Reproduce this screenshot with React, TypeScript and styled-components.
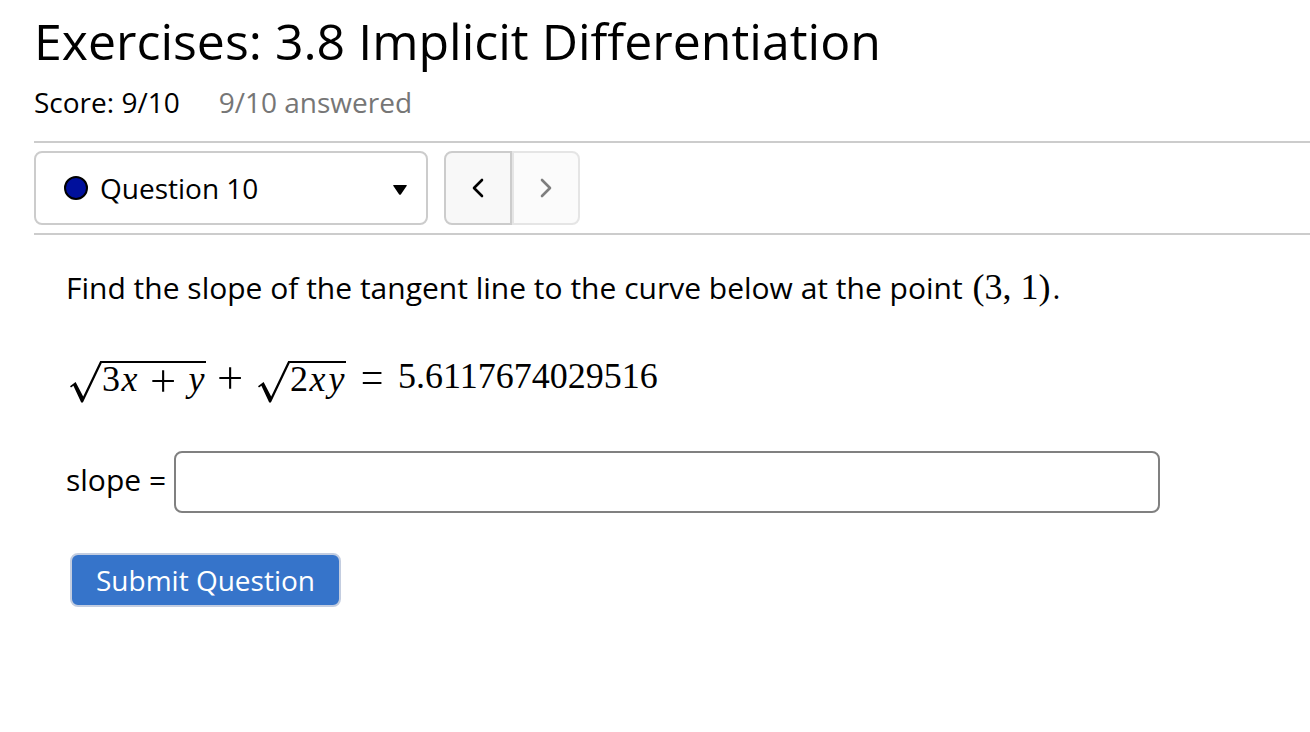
import React from "react";
import styled, { createGlobalStyle } from "styled-components";

const GlobalStyle = createGlobalStyle`
  *, *::before, *::after { box-sizing: border-box; }
  body {
    margin: 0;
    background: #fff;
    color: #000;
    font-family: "Open Sans", "Noto Sans", sans-serif;
    font-size: 28px;
  }
`;

const Page = styled.main`
  padding: 5px 0 32px 34px;
`;

const Title = styled.h1`
  margin: 0;
  font-size: 50px;
  font-weight: 400;
  line-height: 72px;
`;

const ScoreLine = styled.div`
  display: flex;
  gap: 39px;
  margin-bottom: 14px;
  line-height: 50px;
`;

const Answered = styled.span`
  color: #767676;
`;

const Toolbar = styled.nav`
  display: flex;
  gap: 16px;
  padding: 8px 0;
  border-top: 2px solid #ccc;
  border-bottom: 2px solid #ccc;
`;

const Picker = styled.div`
  position: relative;
  width: 394px;
`;

const QuestionSelect = styled.select`
  appearance: none;
  width: 100%;
  height: 74px;
  padding: 0 48px 0 64px;
  border: 2px solid #ccc;
  border-radius: 8px;
  background: #fff;
  color: #000;
  font: inherit;
`;

const StatusDot = styled.span`
  position: absolute;
  top: 25px;
  left: 30px;
  width: 24px;
  height: 24px;
  border: 2px solid #000;
  border-radius: 50%;
  background: #00109c;
  pointer-events: none;
`;

const Caret = styled.svg`
  position: absolute;
  top: 33px;
  right: 20px;
  width: 16px;
  height: 12px;
  pointer-events: none;
`;

const Pager = styled.div`
  display: flex;
`;

const PageButton = styled.button<{ $side: "left" | "right" }>`
  display: flex;
  align-items: center;
  justify-content: center;
  width: 68px;
  height: 74px;
  padding: 0;
  border: 2px solid #ccc;
  border-radius: ${(p) => (p.$side === "left" ? "8px 0 0 8px" : "0 8px 8px 0")};
  background: #f8f8f8;
  color: #000;

  &:disabled {
    opacity: 0.5;
  }
`;

const Question = styled.form`
  padding: 33px 150px 0 32px;
`;

const Prompt = styled.p`
  margin: 0;
  font-size: 30px;
  line-height: 40px;
`;

const InlineMath = styled.span`
  padding: 0 2px;
  font-family: "Liberation Serif", serif;
  font-size: 36px;
  line-height: 36px;
`;

const Equation = styled.div`
  display: flex;
  align-items: flex-start;
  height: 52px;
  margin-top: 43px;
  padding-left: 4px;
  font-family: "Liberation Serif", serif;
  font-size: 36px;
  line-height: 50px;
`;

const Radical = styled.span`
  display: flex;
  margin-top: 10px;
`;

const Surd = styled.svg`
  width: 32px;
  height: 42px;
`;

const Radicand = styled.span`
  display: flex;
  align-self: flex-start;
  border-top: 2px solid #000;
  line-height: 32px;
`;

const Variable = styled.i`
  width: 19px;
  text-align: center;
`;

const Operator = styled.span<{ $before: number; $after: number }>`
  display: flex;
  justify-content: center;
  width: 24px;
  height: 0;
  margin: 0 ${(p) => p.$after}px 0 ${(p) => p.$before}px;
  font-family: Inter, sans-serif;
  font-size: 50px;
  font-weight: 200;
  line-height: 46px;

  ${Radicand} & {
    line-height: 28px;
  }
`;

const AnswerRow = styled.div`
  display: flex;
  align-items: baseline;
  gap: 8px;
  margin-top: 48px;
`;

const AnswerLabel = styled.label`
  font-size: 30px;
  line-height: 40px;
  white-space: nowrap;
`;

const AnswerInput = styled.input`
  flex: 1;
  min-width: 0;
  height: 62px;
  padding: 0 12px;
  border: 2px solid #808080;
  border-radius: 8px;
  background: #fff;
  font-family: inherit;
  font-size: 22px;
`;

const SubmitButton = styled.button`
  height: 54px;
  margin: 40px 0 0 4px;
  padding: 0 24px;
  border: 2px solid #c3cde0;
  border-radius: 8px;
  background: #3674ca;
  color: #fff;
  font: inherit;
`;

function Chevron({ d }: { d: string }) {
  return (
    <svg width="16" height="22" viewBox="0 0 16 22" aria-hidden="true">
      <path d={d} fill="none" stroke="currentColor" strokeWidth="2.6" strokeLinecap="round" strokeLinejoin="round" />
    </svg>
  );
}

function SquareRoot({ children }: { children: React.ReactNode }) {
  return (
    <Radical>
      <Surd viewBox="0 0 32 42" aria-hidden="true">
        <path d="M0 25.2 L5.6 21 L13.2 35.6 L30.2 0 L32 0 L32 1.6 L12.9 41.6 L11.2 41.6 L3.4 24.8 L1 26.4 Z" />
      </Surd>
      <Radicand>{children}</Radicand>
    </Radical>
  );
}

export default function App() {
  return (
    <>
      <GlobalStyle />
      <Page>
        <Title>Exercises: 3.8 Implicit Differentiation</Title>
        <ScoreLine>
          <span>Score: 9/10</span>
          <Answered>9/10 answered</Answered>
        </ScoreLine>
        <Toolbar aria-label="Questions">
          <Picker>
            <QuestionSelect aria-label="Select question" defaultValue="10">
              <option value="10">Question 10</option>
            </QuestionSelect>
            <StatusDot />
            <Caret viewBox="0 0 16 12" aria-hidden="true">
              <path d="M1.8 1 H14.2 Q15.4 1 14.6 2 L9 10.3 Q8 11.4 7 10.3 L1.4 2 Q.6 1 1.8 1Z" />
            </Caret>
          </Picker>
          <Pager>
            <PageButton type="button" $side="left" aria-label="Previous question">
              <Chevron d="M12 3 L4 11 L12 19" />
            </PageButton>
            <PageButton type="button" $side="right" aria-label="Next question" disabled>
              <Chevron d="M4 3 L12 11 L4 19" />
            </PageButton>
          </Pager>
        </Toolbar>
        <Question onSubmit={(e) => e.preventDefault()}>
          <Prompt>
            Find the slope of the tangent line to the curve below at the point{" "}
            <InlineMath>(3, 1)</InlineMath>.
          </Prompt>
          <Equation>
            <SquareRoot>
              <span>3</span>
              <Variable>x</Variable>
              <Operator $before={12} $after={12}>+</Operator>
              <Variable>y</Variable>
            </SquareRoot>
            <Operator $before={12} $after={16}>+</Operator>
            <SquareRoot>
              <span>2</span>
              <Variable>x</Variable>
              <Variable>y</Variable>
            </SquareRoot>
            <Operator $before={14} $after={14}>=</Operator>
            <span>5.6117674029516</span>
          </Equation>
          <AnswerRow>
            <AnswerLabel htmlFor="slope">slope =</AnswerLabel>
            <AnswerInput id="slope" type="text" autoComplete="off" />
          </AnswerRow>
          <SubmitButton type="submit">Submit Question</SubmitButton>
        </Question>
      </Page>
    </>
  );
}
